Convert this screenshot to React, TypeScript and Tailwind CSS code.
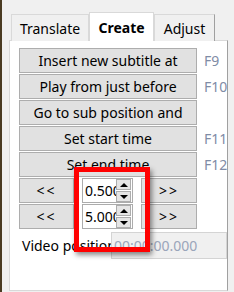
const font = { fontFamily: '"Noto Sans", "Liberation Sans", sans-serif' };

function Btn({ label, className = "" }: { label: string; className?: string }) {
  return (
    <div
      className={`flex h-[25px] items-center justify-center border border-[#adadad] bg-[#e1e1e1] text-[14px] leading-none text-black ${className}`}
    >
      {label}
    </div>
  );
}

function Spin({ value }: { value: string }) {
  return (
    <div className="flex h-[25px] w-[51px] items-center border border-[#acacac] bg-white pl-[2px]">
      <div className="w-[33px] overflow-hidden whitespace-nowrap text-[14px] leading-none text-black">
        {value}
      </div>
      <div className="ml-auto mr-[1px] flex flex-col gap-[1px]">
        <div className="flex h-[11px] w-[15px] items-center justify-center border border-[#adadad] bg-[#e5e5e5]">
          <div className="h-0 w-0 border-x-[4px] border-b-[4px] border-x-transparent border-b-black" />
        </div>
        <div className="flex h-[11px] w-[15px] items-center justify-center border border-[#adadad] bg-[#e5e5e5]">
          <div className="h-0 w-0 border-x-[4px] border-t-[4px] border-x-transparent border-t-black" />
        </div>
      </div>
    </div>
  );
}

const rows = [
  { label: "Insert new subtitle at", key: "F9" },
  { label: "Play from just before", key: "F10" },
  { label: "Go to sub position and", key: "" },
  { label: "Set start time", key: "F11" },
  { label: "Set end time", key: "F12" },
];

export default function App() {
  return (
    <div className="relative flex h-[292px] w-[234px] overflow-hidden bg-[#f0f0f0]" style={font}>
      <div className="w-[2px] shrink-0 bg-[#4a3b22]" />
      <div className="flex flex-col pl-[7px]">
        {/* tabs */}
        <div className="relative z-10 ml-[2px] mt-[12px] flex items-end">
          <div className="-mb-px flex h-[27px] w-[78px] items-center justify-center border border-b-0 border-[#d9d9d9] bg-[#f0f0f0] text-[14px] text-black">
            Translate
          </div>
          <div className="-mb-px flex h-[29px] w-[65px] items-center justify-center border border-b-0 border-[#d9d9d9] bg-white text-[14px] font-bold text-black">
            Create
          </div>
          <div className="-mb-px flex h-[27px] w-[61px] items-center justify-center border border-b-0 border-[#d9d9d9] border-r-[#a0a0a0] bg-[#f0f0f0] text-[14px] text-black">
            Adjust
          </div>
        </div>

        {/* panel */}
        <div className="h-[251px] w-[219px] overflow-hidden border border-[#d9d9d9] border-r-[#a0a0a0] bg-white pl-[9px] pt-[7px]">
          <div className="flex flex-col gap-[1px]">
            {rows.map((r) => (
              <div key={r.label} className="flex items-center">
                <Btn label={r.label} className="w-[178px] shrink-0" />
                <span className="ml-[7px] whitespace-nowrap text-[14px] leading-none text-[#7f8ca6]">
                  {r.key}
                </span>
              </div>
            ))}
            <div className="flex items-center">
              <Btn label="<<" className="w-[55px] shrink-0 tracking-[2px]" />
              <div className="ml-[8px]">
                <Spin value="0.500" />
              </div>
              <Btn label=">>" className="ml-[8px] w-[56px] shrink-0 tracking-[2px]" />
            </div>
            <div className="flex items-center">
              <Btn label="<<" className="w-[55px] shrink-0 tracking-[2px]" />
              <div className="ml-[8px]">
                <Spin value="5.000" />
              </div>
              <Btn label=">>" className="ml-[8px] w-[56px] shrink-0 tracking-[2px]" />
            </div>
          </div>
          <div className="mt-[3px] flex items-center">
            <div className="w-[92px] shrink-0 overflow-hidden whitespace-nowrap pl-[3px] text-[14px] text-black">
              Video position
            </div>
            <div className="flex h-[27px] flex-1 items-center border border-[#d4d4d4] bg-[#f0f0f0] pl-[2px] text-[14px] text-[#9aa5ba]">
              00:00:00.000
            </div>
          </div>
        </div>
      </div>

      {/* highlight annotation */}
      <div className="absolute left-[74px] top-[167px] h-[85px] w-[76px] border-[5px] border-[#ff0000] shadow-[2px_3px_5px_rgba(0,0,0,0.45)]" />
    </div>
  );
}
